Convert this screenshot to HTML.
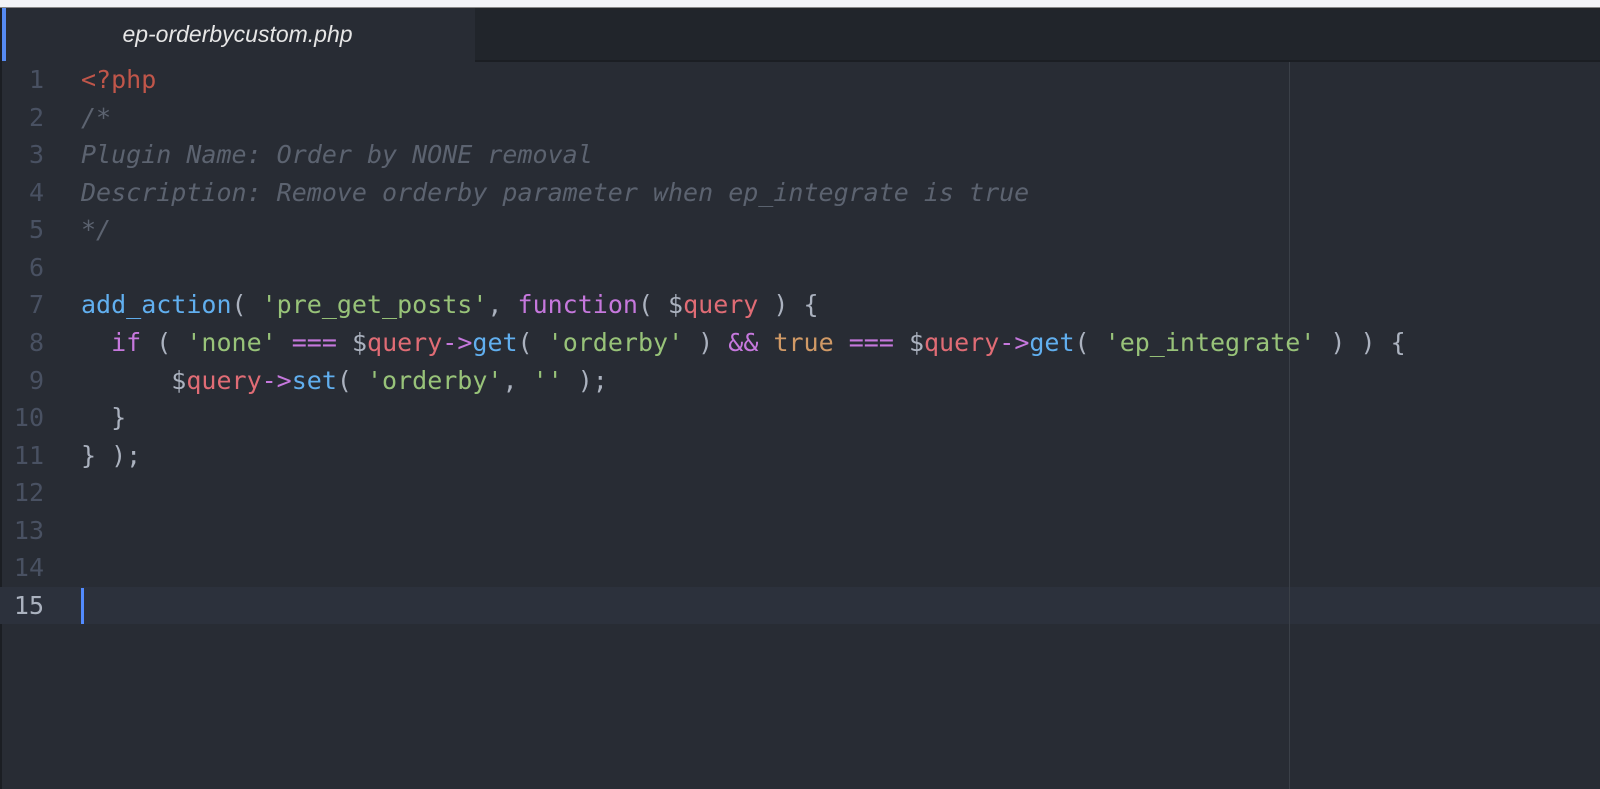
<!DOCTYPE html>
<html><head><meta charset="utf-8"><style>
body{margin:0;width:1600px;height:789px;background:#282c34;overflow:hidden;position:relative;font-family:"DejaVu Sans Mono","Liberation Mono",monospace}
#top{position:absolute;left:0;top:0;width:1600px;height:7px;background:#f3f4f8;border-bottom:1px solid #888}
#bar{position:absolute;left:0;top:8px;width:1600px;height:52px;background:#21252b;border-bottom:2px solid #1b1e23}
#tab{position:absolute;left:0;top:8px;width:475px;height:54px;background:#282c34}
#tab .b{position:absolute;left:2px;top:0;width:4px;height:53px;background:#568af2}
#tab .t{position:absolute;left:0;width:475px;top:0;height:52px;font-family:"Liberation Sans",sans-serif;font-style:italic;font-size:23px;line-height:52px;text-align:center;color:#e6e6e6;box-sizing:border-box}
#left{position:absolute;left:0;top:8px;width:2px;height:781px;background:#1b1e23}
#guide{position:absolute;left:1289px;top:62px;width:1px;height:727px;background:#3b4048}
#cl{position:absolute;left:0;top:587px;width:1600px;height:37px;background:#2c313c}
#cur{position:absolute;left:81px;top:588px;width:3px;height:36px;background:#528bff}
#code{position:absolute;left:0;top:61px;font-size:25px;line-height:37.57px;color:#abb2bf;white-space:pre}
.l{height:37.57px}
.n{display:inline-block;width:44px;text-align:right;color:#495162;margin-right:37px}
.cn{color:#abb2bf}
.c{color:#5c6370;font-style:italic}
.k{color:#c678dd}.s{color:#98c379}.f{color:#61afef}.v{color:#e06c75}.o{color:#d19a66}.p{color:#c0564a}
</style></head><body>
<div id="top"></div><div id="bar"></div>
<div id="tab"><div class="b"></div><div class="t">ep-orderbycustom.php</div></div>
<div id="left"></div>
<div id="cl"></div><div id="guide"></div><div id="cur"></div>
<div id="code"><div class="l"><span class="n">1</span><span class="p">&lt;?php</span></div><div class="l"><span class="n">2</span><span class="c">/*</span></div><div class="l"><span class="n">3</span><span class="c">Plugin Name: Order by NONE removal</span></div><div class="l"><span class="n">4</span><span class="c">Description: Remove orderby parameter when ep_integrate is true</span></div><div class="l"><span class="n">5</span><span class="c">*/</span></div><div class="l"><span class="n">6</span></div><div class="l"><span class="n">7</span><span class="f">add_action</span>( <span class="s">'pre_get_posts'</span>, <span class="k">function</span>( $<span class="v">query</span> ) {</div><div class="l"><span class="n">8</span>  <span class="k">if</span> ( <span class="s">'none'</span> <span class="k">===</span> $<span class="v">query</span><span class="k">-&gt;</span><span class="f">get</span>( <span class="s">'orderby'</span> ) <span class="k">&amp;&amp;</span> <span class="o">true</span> <span class="k">===</span> $<span class="v">query</span><span class="k">-&gt;</span><span class="f">get</span>( <span class="s">'ep_integrate'</span> ) ) {</div><div class="l"><span class="n">9</span>      $<span class="v">query</span><span class="k">-&gt;</span><span class="f">set</span>( <span class="s">'orderby'</span>, <span class="s">''</span> );</div><div class="l"><span class="n">10</span>  }</div><div class="l"><span class="n">11</span>} );</div><div class="l"><span class="n">12</span></div><div class="l"><span class="n">13</span></div><div class="l"><span class="n">14</span></div><div class="l"><span class="n cn">15</span></div></div>
</body></html>
